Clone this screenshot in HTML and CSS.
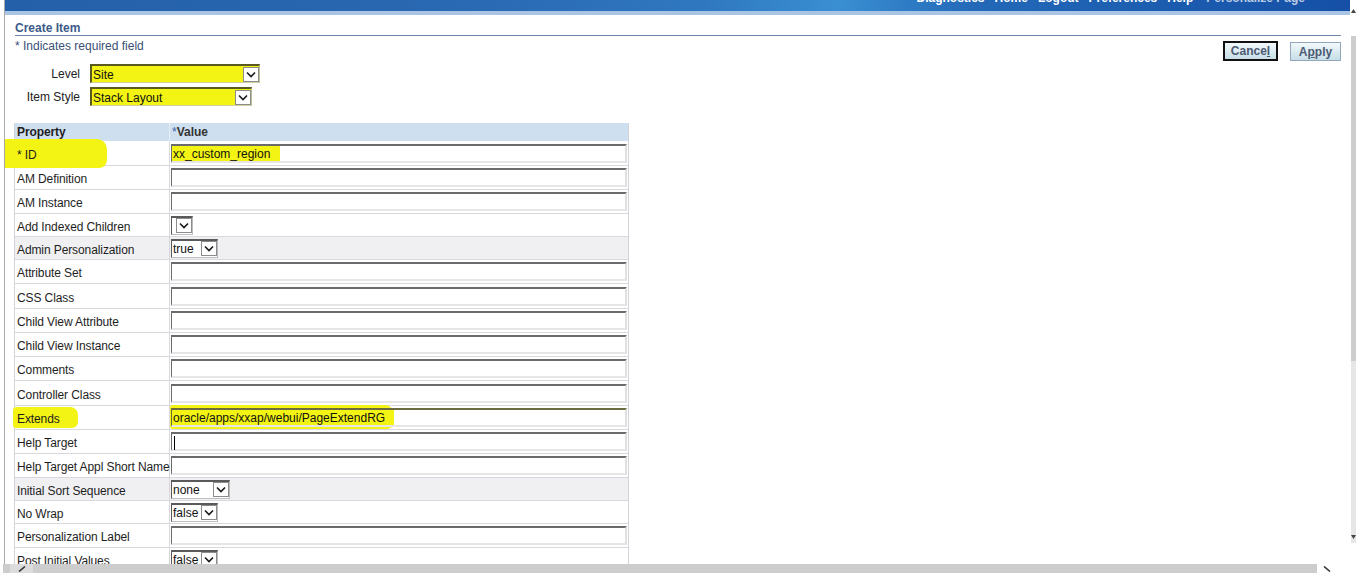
FILE: index.html
```html
<!DOCTYPE html>
<html lang="en">
<head>
<meta charset="utf-8">
<title>Create Item</title>
<link rel="stylesheet" href="styles.css">
</head>
<body>
<div class="frame">
  <div class="banner">
    <nav class="global">
      <span>Diagnostics</span>
      <span>Home</span>
      <span>Logout</span>
      <span>Preferences</span>
      <span>Help</span>
      <span class="dim">Personalize Page</span>
    </nav>
  </div>
  <div class="strip"></div>
  <main class="content">
    <h1 class="title">Create Item</h1>
    <div class="topbar">
      <p class="req">* Indicates required field</p>
      <div class="actions">
        <button class="btn btn-cancel">Cance<u>l</u></button>
        <button class="btn btn-apply">A<u>p</u>ply</button>
      </div>
    </div>
    <div class="form">
      <div class="frow">
        <label>Level</label>
        <div class="sel sel-yellow w-level"><span class="sel-val">Site</span><span class="sel-btn"><svg width="10" height="7" viewBox="0 0 10 7"><path d="M1 1.5 L5 5.5 L9 1.5" fill="none" stroke="#1a1a1a" stroke-width="1.6"/></svg></span></div>
      </div>
      <div class="frow">
        <label>Item Style</label>
        <div class="sel sel-yellow w-style"><span class="sel-val">Stack Layout</span><span class="sel-btn"><svg width="10" height="7" viewBox="0 0 10 7"><path d="M1 1.5 L5 5.5 L9 1.5" fill="none" stroke="#1a1a1a" stroke-width="1.6"/></svg></span></div>
      </div>
    </div>

    <div class="ptable">
      <div class="prow phead"><div class="pl">Property</div><div class="pv"><span class="star">*</span>Value</div></div>
      <div class="prow r-id"><div class="pl hl-id"><span class="txt">* ID</span></div><div class="pv"><div class="inp inp-id">xx_custom_region</div></div></div>
      <div class="prow"><div class="pl">AM Definition</div><div class="pv"><div class="inp"></div></div></div>
      <div class="prow"><div class="pl">AM Instance</div><div class="pv"><div class="inp"></div></div></div>
      <div class="prow s"><div class="pl">Add Indexed Children</div><div class="pv"><div class="sel sm w-empty"><span class="sel-val"></span><span class="sel-btn"><svg width="10" height="7" viewBox="0 0 10 7"><path d="M1 1.5 L5 5.5 L9 1.5" fill="none" stroke="#1a1a1a" stroke-width="1.6"/></svg></span></div></div></div>
      <div class="prow s alt"><div class="pl">Admin Personalization</div><div class="pv"><div class="sel sm w-bool"><span class="sel-val">true</span><span class="sel-btn"><svg width="10" height="7" viewBox="0 0 10 7"><path d="M1 1.5 L5 5.5 L9 1.5" fill="none" stroke="#1a1a1a" stroke-width="1.6"/></svg></span></div></div></div>
      <div class="prow"><div class="pl">Attribute Set</div><div class="pv"><div class="inp"></div></div></div>
      <div class="prow tall"><div class="pl">CSS Class</div><div class="pv"><div class="inp"></div></div></div>
      <div class="prow"><div class="pl">Child View Attribute</div><div class="pv"><div class="inp"></div></div></div>
      <div class="prow"><div class="pl">Child View Instance</div><div class="pv"><div class="inp"></div></div></div>
      <div class="prow"><div class="pl">Comments</div><div class="pv"><div class="inp"></div></div></div>
      <div class="prow tall"><div class="pl">Controller Class</div><div class="pv"><div class="inp"></div></div></div>
      <div class="prow"><div class="pl hl-ext"><span class="txt">Extends</span></div><div class="pv"><div class="inp inp-ext">oracle/apps/xxap/webui/PageExtendRG</div></div></div>
      <div class="prow"><div class="pl">Help Target</div><div class="pv"><div class="inp"><span class="caret"></span></div></div></div>
      <div class="prow"><div class="pl">Help Target Appl Short Name</div><div class="pv"><div class="inp"></div></div></div>
      <div class="prow s alt"><div class="pl">Initial Sort Sequence</div><div class="pv"><div class="sel sm w-none"><span class="sel-val">none</span><span class="sel-btn"><svg width="10" height="7" viewBox="0 0 10 7"><path d="M1 1.5 L5 5.5 L9 1.5" fill="none" stroke="#1a1a1a" stroke-width="1.6"/></svg></span></div></div></div>
      <div class="prow s"><div class="pl">No Wrap</div><div class="pv"><div class="sel sm w-bool"><span class="sel-val">false</span><span class="sel-btn"><svg width="10" height="7" viewBox="0 0 10 7"><path d="M1 1.5 L5 5.5 L9 1.5" fill="none" stroke="#1a1a1a" stroke-width="1.6"/></svg></span></div></div></div>
      <div class="prow"><div class="pl">Personalization Label</div><div class="pv"><div class="inp"></div></div></div>
      <div class="prow s"><div class="pl">Post Initial Values</div><div class="pv"><div class="sel sm w-bool"><span class="sel-val">false</span><span class="sel-btn"><svg width="10" height="7" viewBox="0 0 10 7"><path d="M1 1.5 L5 5.5 L9 1.5" fill="none" stroke="#1a1a1a" stroke-width="1.6"/></svg></span></div></div></div>
    </div>
  </main>
</div>

<div class="vscroll">
  <svg class="varrow-up" width="5" height="4" viewBox="0 0 5 4"><path d="M0 4 L2.5 0 L5 4 Z" fill="#444"/></svg>
  <div class="vtrack"><div class="vthumb"></div></div>
  <svg class="varrow-down" width="5" height="4" viewBox="0 0 5 4"><path d="M0 0 L2.5 4 L5 0 Z" fill="#444"/></svg>
</div>
<div class="hscroll">
  <div class="harrow"><svg width="8" height="6" viewBox="0 0 8 6"><path d="M7 0.5 L1 5.5" fill="none" stroke="#333" stroke-width="1.6"/></svg></div>
</div>
<div class="hcorner"><svg width="8" height="6" viewBox="0 0 8 6"><path d="M1 0.5 L7 5.5" fill="none" stroke="#333" stroke-width="1.6"/></svg></div>
</body>
</html>
```

FILE: styles.css
```css
html, body {
  margin: 0;
  padding: 0;
}
body {
  font-family: "Liberation Sans", Arial, sans-serif;
  font-size: 12px;
  color: #1e1e1e;
  background: #fff;
  overflow: hidden;
  height: 573px;
}
.frame {
  margin-left: 4px;
  margin-right: 6px;
  border-left: 1px solid #a9a9a9;
  height: 564px;
  overflow: hidden;
}
.banner {
  height: 11px;
  overflow: hidden;
  display: flex;
  justify-content: flex-end;
  padding-right: 45px;
  background: linear-gradient(90deg, #2460a9 0%, #2a69b3 35%, #2f78c0 52%, #3a8fd2 62%, #2369b8 72%, #1c5db0 85%, #1550a6 100%);
}
.global {
  display: flex;
  gap: 10px;
  margin-top: -9px;
  font-weight: bold;
  color: #fff;
  line-height: 15px;
}
.global .dim {
  color: #b9cbe4;
  margin-left: 3px;
}
.strip {
  height: 4px;
  background: #a9c5e3;
}
.content {
  padding: 0 9px 0 10px;
}
.title {
  margin: 5px 0 0;
  font-size: 12px;
  font-weight: bold;
  line-height: 14px;
  color: #3b5a88;
  border-bottom: 1px solid #6f89ae;
  padding-top: 1px;
}
.topbar {
  display: flex;
  justify-content: space-between;
  height: 28px;
}
.req {
  margin: 3px 0 0;
  line-height: 14px;
  color: #3a5078;
}
.actions {
  display: flex;
  gap: 12px;
  margin-top: 5px;
  align-items: flex-start;
}
.btn {
  font-family: "Liberation Sans", Arial, sans-serif;
  font-weight: bold;
  font-size: 12px;
  color: #4d5a73;
  padding: 0;
  box-sizing: border-box;
  background: linear-gradient(#f2f9fb, #c6dee7);
  border: 1px solid #94a6ba;
}
.btn-cancel {
  width: 55px;
  height: 20px;
  border: 2px solid #111;
}
.btn-apply {
  width: 51px;
  height: 19px;
  margin-top: 1px;
}
.form {
  display: flex;
  flex-direction: column;
  gap: 4px;
}
.frow {
  display: flex;
  align-items: center;
  height: 19px;
  gap: 10px;
}
.frow label {
  width: 65px;
  text-align: right;
  color: #222;
  padding-top: 1px;
}
.sel {
  display: flex;
  align-items: center;
  height: 19px;
  box-sizing: border-box;
  border-style: solid;
  border-width: 2px 1px 1px 2px;
  border-color: #4a4a4a #c4c4c4 #c4c4c4 #4a4a4a;
  background: #fff;
  color: #111;
}
.sel-yellow {
  background: #f3f314;
  border-color: #5a5a20 #bfbf9a #d0d0a0 #5a5a20;
}
.w-level { width: 170px; }
.w-style { width: 162px; }
.sel-val {
  flex: 1;
  padding-left: 1px;
  padding-top: 1px;
  white-space: nowrap;
  overflow: hidden;
}
.sel-btn {
  width: 16px;
  height: 15px;
  box-sizing: border-box;
  border: 1px solid #8c8c8c;
  background: #fff;
  display: flex;
  align-items: center;
  justify-content: center;
}
.sel.sm {
  height: 19px;
  border-width: 2px 1px 1px 1px;
  border-color: #5a5a5a #bdbdbd #bdbdbd #5a5a5a;
}
.w-empty { width: 22px; }
.w-bool { width: 47px; }
.w-none { width: 59px; }

.ptable {
  margin-top: 17px;
  margin-left: -1px;
  width: 615px;
  box-sizing: border-box;
  border-left: 1px solid #d3d3da;
  border-right: 1px solid #d3d3da;
}
.prow {
  display: grid;
  grid-template-columns: 155px 1fr;
  height: 24px;
  box-sizing: border-box;
  border-bottom: 1px solid #d8d8de;
}
.prow.s { height: 23px; }
.prow.tall { height: 25px; }
.prow.r-id { height: 25px; }
.prow.alt { background: #f0f0f3; }
.pl {
  border-right: 1px solid #d8d8de;
  padding-left: 2px;
  padding-top: 3px;
  display: flex;
  align-items: center;
  position: relative;
  white-space: nowrap;
  color: #1e1e1e;
  letter-spacing: -0.1px;
}
.pv {
  display: flex;
  align-items: center;
  padding-left: 1px;
  position: relative;
}
.phead {
  height: 18px;
  background: #cedff0;
  border-bottom: none;
  font-weight: bold;
  color: #333;
}
.phead .pl {
  border-right-color: #e4ecf4;
  padding-top: 0;
}
.phead .pv {
  padding-left: 2px;
}
.star {
  color: #3a62a8;
  font-weight: normal;
}
.inp {
  width: 456px;
  height: 19px;
  box-sizing: border-box;
  border-style: solid;
  border-width: 2px 2px 2px 1px;
  border-color: #6b6b6b #e0e0e0 #e6e6e6 #6b6b6b;
  background: #fff;
  padding-left: 1px;
  padding-top: 1px;
  line-height: 15px;
  color: #111;
  white-space: nowrap;
}
.inp-id {
  background: linear-gradient(90deg, #f3f314 0 108px, #fff 108px);
}
.inp-ext {
  background: linear-gradient(90deg, #f3f314 0 222px, #fff 222px);
  border-color: #6b6b40 #e0e0e0 #e6e6e6 #6b6b40;
  position: relative;
}
.txt {
  position: relative;
}
.hl-id::before {
  content: "";
  position: absolute;
  left: -15px;
  top: -2px;
  width: 107px;
  height: 29px;
  background: #f3f314;
  border-radius: 3px 10px 8px 2px;
}
.hl-ext::before {
  content: "";
  position: absolute;
  left: -2px;
  top: 1px;
  width: 65px;
  height: 21px;
  background: #f3f314;
  border-radius: 4px 8px 6px 3px;
}
.pv:has(.inp-ext)::before {
  content: "";
  position: absolute;
  left: 0;
  top: -1px;
  width: 223px;
  height: 24px;
  background: #f3f314;
  border-radius: 3px 8px 6px 3px;
}
.caret {
  display: inline-block;
  width: 1px;
  height: 14px;
  background: #000;
  vertical-align: middle;
  margin-left: 1px;
}

.vscroll {
  position: fixed;
  right: 0;
  top: 0;
  width: 6px;
  height: 573px;
  background: #fff;
}
.varrow-up {
  position: absolute;
  top: 9px;
  left: 1px;
}
.vtrack {
  position: absolute;
  top: 36px;
  left: 1px;
  width: 5px;
  height: 507px;
  background: #e6e6e6;
}
.vthumb {
  height: 325px;
  background: #cdcdcd;
}
.varrow-down {
  position: absolute;
  top: 535px;
  left: 1px;
}
.hscroll {
  position: fixed;
  left: 3px;
  bottom: 0;
  width: 1314px;
  height: 9px;
  background: #cdcdcd;
}
.harrow {
  position: absolute;
  left: 7px;
  top: 0;
  width: 23px;
  height: 9px;
  background: #dcdcdc;
  display: flex;
  align-items: center;
  justify-content: center;
}
.hcorner {
  position: fixed;
  left: 1321px;
  bottom: 0;
  width: 12px;
  height: 9px;
  display: flex;
  align-items: center;
  justify-content: center;
}
```
